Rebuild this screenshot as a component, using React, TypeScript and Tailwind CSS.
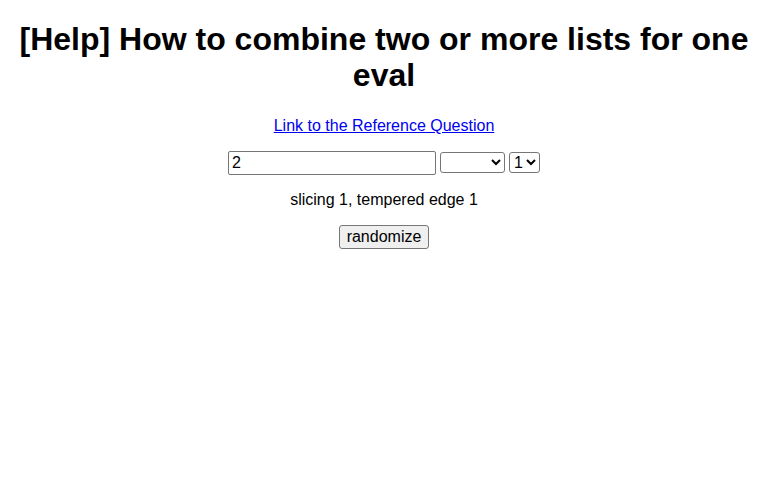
import React from "react";

export default function App() {
  return (
    <div className="min-h-[480px] bg-white text-black font-['Liberation_Sans',Arial,sans-serif] text-[16px] px-2 text-center">
      <h1 className="text-[32px] font-bold leading-[36.8px] pt-[20.6px] pb-[22.28px]">
        [Help] How to combine two or more lists for one eval
      </h1>
      <p className="leading-[18.4px] pt-[1px]">
        <a href="#" className="text-[#0000ee] underline">
          Link to the Reference Question
        </a>
      </p>
      <div className="flex justify-center items-center gap-1 mt-[15px] h-[24px]">
        <input
          type="text"
          defaultValue="2"
          className="w-[208px] h-[24px] border border-[#767676] rounded-[2px] px-[3px] text-[16px] leading-[18px] text-black bg-white outline-none"
        />
        <select className="appearance-auto w-[65px] h-[21px] border border-[#767676] rounded-[3px] bg-white text-[16px] text-black">
          <option value=""></option>
        </select>
        <select className="appearance-auto w-[31px] h-[21px] border border-[#767676] rounded-[3px] bg-white text-[16px] text-black" defaultValue="1">
          <option value="1">1</option>
        </select>
      </div>
      <p className="mt-4 leading-[18.4px]">slicing 1, tempered edge 1</p>
      <div className="mt-4 flex justify-center">
        <button className="h-[24px] px-[7px] border border-[#767676] rounded-[3px] bg-[#efefef] text-[16px] leading-[18px] text-black">
          randomize
        </button>
      </div>
    </div>
  );
}
